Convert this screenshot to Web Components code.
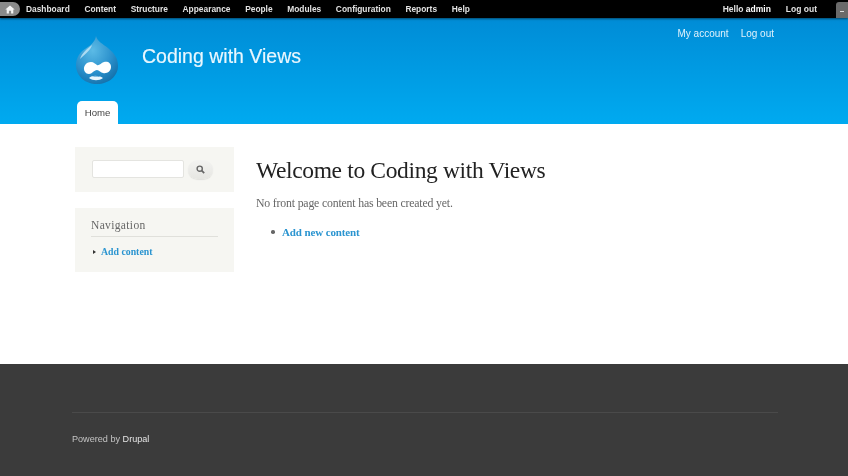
<!DOCTYPE html>
<html><head><meta charset="utf-8">
<style>
html,body{margin:0;padding:0;height:476px;overflow:hidden;background:#fff}
body{font-family:"Liberation Serif",serif;display:flex;flex-direction:column;filter:blur(.35px)}
</style></head><body>
<d-toolbar></d-toolbar>
<d-header></d-header>
<d-main>
  <d-search slot="side"></d-search>
  <d-nav slot="side"></d-nav>
</d-main>
<d-footer></d-footer>
<script>
function def(name,html){
  customElements.define(name,class extends HTMLElement{
    constructor(){super();this.attachShadow({mode:"open"}).innerHTML=html;}
  });
}
def("d-toolbar",`<style>
:host{display:flex;align-items:center;height:18px;background:#000;box-shadow:0 1px 2px rgba(0,0,0,.5);position:relative;z-index:2;
font:bold 8.4px/18px "Liberation Sans",sans-serif;color:#e2e2e2;overflow:hidden;flex:none}
.home{width:20px;height:14px;background:#8a8a8a;border-radius:0 8px 8px 0;display:flex;align-items:center;justify-content:center;flex:none}
nav{display:flex;gap:14.65px;margin-left:6px}
.right{margin-left:auto;display:flex;align-items:center;font-size:8.5px}
.right b{color:#fff}
.hello{margin-right:15px}
.logout{margin-right:19px}
.tog{width:12px;height:18px;background:#6a6a6a;border-radius:3px 0 0 0;margin-top:4px;display:flex;align-items:center;justify-content:center;flex:none}
.tog i{display:block;width:4px;height:1px;background:#ddd}
</style>
<div class="home"><svg width="10" height="9" viewBox="0 0 10 9"><path d="M5 .5 .3 4.6h1.4V8.6h2.2V5.8h2.2v2.8h2.2V4.6h1.4z" fill="#f4f4f4"/></svg></div>
<nav><span>Dashboard</span><span>Content</span><span>Structure</span><span>Appearance</span><span>People</span><span>Modules</span><span>Configuration</span><span>Reports</span><span>Help</span></nav>
<div class="right"><span class="hello">Hello <b>admin</b></span><span class="logout">Log out</span><span class="tog"><i></i></span></div>`);

def("d-header",`<style>
:host{display:block;height:106px;background:linear-gradient(#008cd6,#00aaf0);flex:none;box-sizing:border-box;padding:0 74px 0 77px;font-family:"Liberation Sans",sans-serif}
.top{display:flex;height:83px}
.logo{width:42px;height:48px;margin:18px 0 0 -1px;flex:none}
h1{margin:26px 0 0 24px;font:normal 19.5px/24px "Liberation Sans",sans-serif;color:#eaf7fe;-webkit-text-stroke:.15px #eaf7fe}
.links{margin-left:auto;margin-top:10px;display:flex;gap:12px;font:10px/12px "Liberation Sans",sans-serif;color:#dff1fb}
.tab{display:inline-block;width:41px;height:23px;background:#fff;border-radius:5px 5px 0 0;color:#444;font:9.6px/23px "Liberation Sans",sans-serif;text-align:center;vertical-align:top}
</style>
<div class="top">
<svg class="logo" viewBox="0 0 42 48"><defs>
<radialGradient id="g" cx=".4" cy=".3" r=".85"><stop offset="0" stop-color="#5cbbe6"/><stop offset=".55" stop-color="#2a90cc"/><stop offset="1" stop-color="#0d669f"/></radialGradient></defs>
<path d="M20 0c1 5 7 8 12 12 6 5 10 10 10 18 0 10-9 18-21 18S0 40 0 29c0-7 4-13 9-16 5-3 10-7 11-13z" fill="url(#g)"/>
<path d="M4 23c2-6 7-10 12-14-1 5-7 9-12 14z" fill="#c5e7f7" opacity=".8"/>
<path d="M9 36c-3-5 1-10 6-10 3 0 4 2 6 3 2 1 4-2 7-3 4-1 7 1 7 5 0 4-4 7-8 6-2 0-4-3-6-3-3 0-5 4-8 4-2 0-3-1-4-2z" fill="#fff"/>
<path d="M13 42c3-3 10-3 14 0-4 3-10 3-14 0z" fill="#e8f5fc"/>
<path d="M16 41c3-2 6-2 8 0-3-.6-5-.6-8 0z" fill="#1f88c8"/>
</svg>
<h1>Coding with Views</h1>
<div class="links"><span>My account</span><span>Log out</span></div>
</div>
<span class="tab">Home</span>`);

def("d-main",`<style>
:host{display:flex;flex:none;height:240px;box-sizing:border-box;padding:23px 0 0 75px;background:#fff}
aside{width:159px;display:flex;flex-direction:column;gap:15px;flex:none}
article{margin-left:22px;color:#555}
h2{margin:9px 0 0;font:normal 23.5px/28px "Liberation Serif",serif;letter-spacing:-.35px;color:#222}
p{margin:12px 0 0;font:11.8px/14px "Liberation Serif",serif;letter-spacing:-.18px;color:#666}
ul{margin:15px 0 0;padding:0 0 0 26px;list-style:none}
li{display:flex;align-items:center;gap:6.5px;font:bold 11px/14px "Liberation Serif",serif;letter-spacing:-.12px;color:#2a94d0}
li::before{content:"";width:3.5px;height:3.5px;border-radius:50%;background:#666;margin-left:-11px;margin-right:1px}
</style>
<aside><slot name="side"></slot></aside>
<article><h2>Welcome to Coding with Views</h2>
<p>No front page content has been created yet.</p>
<ul><li>Add new content</li></ul></article>`);

def("d-search",`<style>
:host{display:flex;align-items:center;height:45px;box-sizing:border-box;padding:0 0 1px 17px;margin-bottom:1px;background:#f6f6f2}
.i{width:92px;height:18px;box-sizing:border-box;background:#fff;border:1px solid #e4e4e0;border-radius:2px}
.b{width:25px;height:19px;margin-left:4px;border-radius:9.5px;background:linear-gradient(#f3f3f1,#e6e6e2);display:flex;align-items:center;justify-content:center;box-shadow:0 1px 1px #e2e2de}
</style><div class="i"></div><div class="b"><svg width="9" height="9" viewBox="0 0 9 9"><circle cx="3.7" cy="3.7" r="2.6" fill="none" stroke="#666" stroke-width="1.4"/><path d="M5.7 5.7 8.2 8.2" stroke="#666" stroke-width="1.7"/></svg></div>`);

def("d-nav",`<style>
:host{display:block;height:64px;box-sizing:border-box;padding:10px 16px 0;background:#f6f6f2}
h3{margin:0;font:normal 11.5px/14px "Liberation Serif",serif;color:#666;letter-spacing:.35px;padding-bottom:4px;border-bottom:1px solid #e0e0db}
div{display:flex;align-items:center;margin-top:8px;font:bold 9.8px/13px "Liberation Serif",serif;color:#2a94d0}
i{width:0;height:0;border-left:3px solid #333;border-top:2.5px solid transparent;border-bottom:2.5px solid transparent;margin:1px 5px 0 2px}
</style><h3>Navigation</h3><div><i></i>Add content</div>`);

def("d-footer",`<style>
:host{display:block;flex:1;background:#3b3b3b;box-sizing:border-box;padding:48px 70px 0 72px;font:9.1px/12px "Liberation Sans",sans-serif;color:#c4c4c4}
.r{height:1px;background:#4a4a4a}
p{margin:20px 0 0}
b{font-weight:normal;color:#e4e4e4}
</style><div class="r"></div><p>Powered by <b>Drupal</b></p>`);
</script>
</body></html>
